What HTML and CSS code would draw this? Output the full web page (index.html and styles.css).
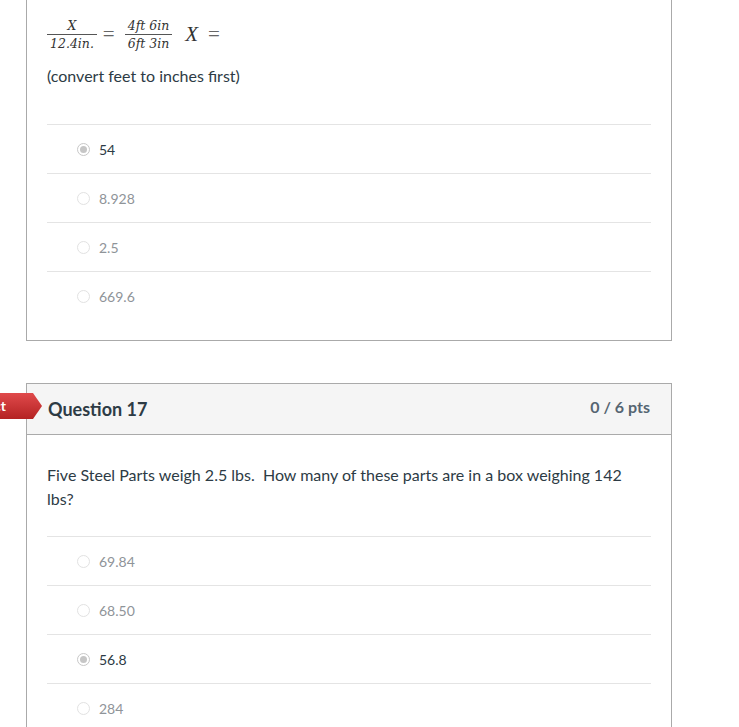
FILE: index.html
```html
<!DOCTYPE html>
<html>
<head>
    <title>Quiz</title>
    <link rel="stylesheet" href="styles.css">
</head>
<body>
    <div class="question first">
        <div class="text">
            <div class="formula">
                <span class="frac"><span class="num">X</span><span class="den">12.4in.</span></span>
                <span class="eq">=</span>
                <span class="frac"><span class="num">4ft 6in</span><span class="den">6ft 3in</span></span>
                <span class="var">X</span>
                <span class="eq">=</span>
            </div>
            <p class="prompt">(convert feet to inches first)</p>
            <div class="answers">
                <div class="answer selected"><span class="radio"></span>54</div>
                <div class="answer"><span class="radio"></span>8.928</div>
                <div class="answer"><span class="radio"></span>2.5</div>
                <div class="answer"><span class="radio"></span>669.6</div>
            </div>
        </div>
    </div>

    <div class="question">
        <div class="flag">Incorrect</div>
        <div class="header">
            <span class="name">Question 17</span>
            <span class="points">0 / 6 pts</span>
        </div>
        <div class="text">
            <p class="prompt body">Five Steel Parts weigh 2.5 lbs.&nbsp; How many of these parts are in a box weighing 142 lbs?</p>
            <div class="answers">
                <div class="answer"><span class="radio"></span>69.84</div>
                <div class="answer"><span class="radio"></span>68.50</div>
                <div class="answer selected"><span class="radio"></span>56.8</div>
                <div class="answer"><span class="radio"></span>284</div>
            </div>
        </div>
    </div>
</body>
</html>
```

FILE: styles.css
```css
body {
    font-family: Lato, "Open Sans", Arial, sans-serif;
    color: #2d3b45;
    background-color: white;
    margin: 0;
    padding: 0 0 0 26px;
}
.question {
    position: relative;
    width: 644px;
    border: 1px solid #aaaaaa;
    margin-bottom: 42px;
}
.question.first {
    border-top: none;
}
.text {
    padding: 0 20px 20px 20px;
}
.first .text {
    padding-top: 13px;
}
.formula {
    display: flex;
    align-items: center;
    font-family: "DejaVu Serif", "Liberation Serif", serif;
    font-style: italic;
    color: #333;
    height: 42px;
}
.frac {
    display: inline-flex;
    flex-direction: column;
    align-items: center;
    font-size: 12.5px;
    line-height: 15px;
}
.num {
    border-bottom: 1px solid #555;
    padding: 0 3px 1px 3px;
    align-self: stretch;
    text-align: center;
}
.den {
    padding: 1px 3px 0 3px;
}
.eq {
    font-family: "Liberation Serif", serif;
    font-style: normal;
    font-size: 21px;
    margin: 0 10px 0 6px;
    color: #666;
}
.var {
    font-family: "Liberation Serif", serif;
    font-size: 21px;
    margin-left: 13px;
    margin-right: 4px;
    color: #333;
}
.prompt {
    font-size: 16px;
    line-height: 24px;
    margin: 9px 0 36px 0;
}
.prompt.body {
    margin: 28px 0 25px 0;
}
.answer {
    display: flex;
    align-items: center;
    height: 48px;
    border-top: 1px solid #e4e4e4;
    padding-left: 30px;
    font-size: 14px;
    color: #8f9499;
}
.answer.selected {
    color: #2d3b45;
}
.radio {
    width: 11px;
    height: 11px;
    border: 1px solid #e2e2e2;
    border-radius: 50%;
    margin-right: 9px;
    box-sizing: content-box;
}
.selected .radio {
    width: 7px;
    height: 7px;
    border: 1px solid #c8c8c8;
    background-color: #c6c6c6;
    padding: 2px;
    background-clip: content-box;
}
.header {
    display: flex;
    justify-content: space-between;
    align-items: center;
    height: 50px;
    background-color: #f5f5f5;
    border-bottom: 1px solid #aaaaaa;
    padding: 0 21px 0 21px;
}
.name {
    font-size: 18px;
    font-weight: bold;
}
.points {
    font-size: 16px;
    font-weight: bold;
    color: #556572;
    margin-bottom: 5px;
}
.flag {
    position: absolute;
    top: 9px;
    left: -116px;
    width: 131px;
    height: 26px;
    padding-right: 36px;
    box-sizing: border-box;
    text-align: right;
    line-height: 26px;
    font-size: 14px;
    font-weight: bold;
    color: white;
    background: linear-gradient(#e04a4b, #b42323);
    clip-path: polygon(0 0, 122px 0, 131px 50%, 122px 100%, 0 100%);
}
```
